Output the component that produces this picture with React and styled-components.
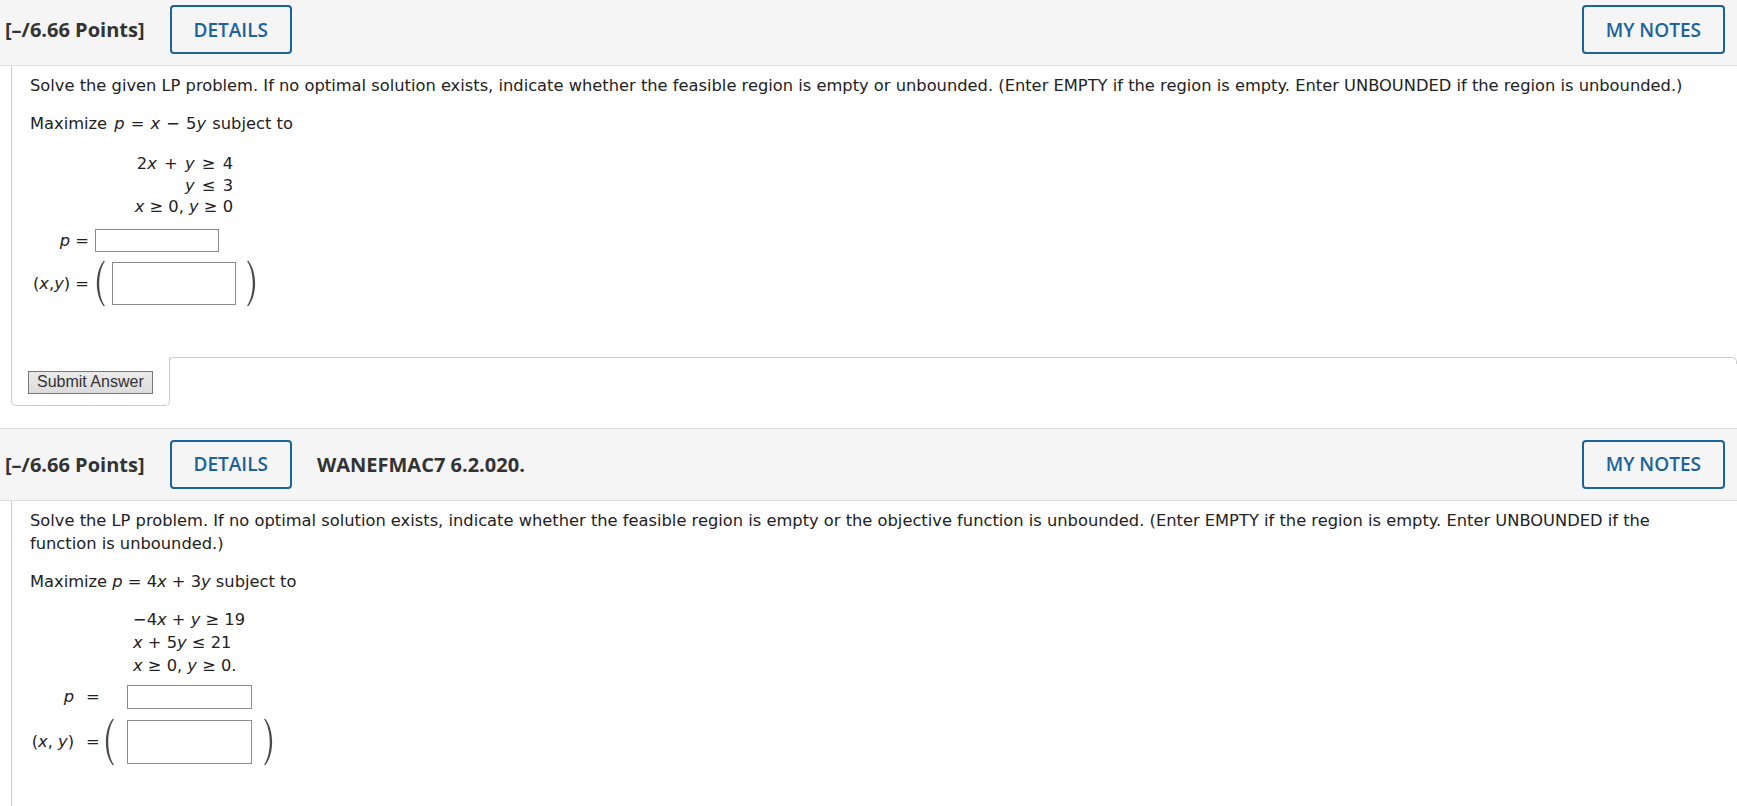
import React from 'react';
import styled, { createGlobalStyle } from 'styled-components';

const GlobalStyle = createGlobalStyle`
	html, body {
		margin: 0;
		padding: 0;
		background: #fff;
	}
	body {
		font-family: 'DejaVu Sans', Verdana, sans-serif;
		color: #222;
		overflow: hidden;
	}
`;

const Page = styled.div`
	margin-top: -7px;
`;

const Header = styled.div`
	display: flex;
	align-items: center;
	gap: 25px;
	height: 71px;
	padding: 0 12px 0 5px;
	background: #f5f5f5;
	border-top: 1px solid #ddd;
	border-bottom: 1px solid #ddd;
	font-family: 'Open Sans', 'Liberation Sans', sans-serif;
`;

const Points = styled.span`
	font-size: 20px;
	font-weight: 700;
	color: #333;
	white-space: nowrap;
`;

const OutlineButton = styled.button`
	height: 49px;
	padding: 0 22px;
	margin-left: ${(p) => (p.$right ? 'auto' : '0')};
	border: 2px solid #1c6399;
	border-radius: 4px;
	background: transparent;
	color: #1c6399;
	font-family: 'Open Sans', 'Liberation Sans', sans-serif;
	font-size: 19px;
	font-weight: 600;
	cursor: pointer;
`;

const Body = styled.div`
	margin-left: 11px;
	border-left: 1px solid #ccc;
	padding: 8px 40px ${(p) => p.$bottom}px 18px;
	font-size: 16.3px;
	line-height: 23px;
`;

const Para = styled.p`
	margin: 0 0 ${(p) => p.$gap || 15}px;
`;

const V = styled.i`
	font-style: italic;
`;

const MathExpr = styled.span`
	margin: 0 1px 0 7px;
	word-spacing: 1px;
`;

const EqRight = styled.div`
	width: 203px;
	display: grid;
	justify-content: end;
	margin-top: 18px;
`;

const EqTable = styled.div`
	display: grid;
	grid-template-columns: repeat(5, auto);
	column-gap: 5px;
	justify-items: end;
	line-height: 21.5px;
`;

const EqWide = styled.span`
	grid-column: 1 / -1;
	justify-self: end;
`;

const EqList = styled.div`
	margin: 15px 0 0 103px;
	line-height: 23px;
`;

const Answers = styled.div`
	display: grid;
	justify-content: start;
	row-gap: ${(p) => p.$gap}px;
	margin-top: ${(p) => p.$top}px;
`;

const AnswerRow = styled.div`
	display: flex;
	align-items: center;
`;

const Label = styled.span`
	flex: none;
	width: ${(p) => p.$w}px;
	text-align: right;
	white-space: nowrap;
`;

const EqSign = styled.span`
	flex: none;
	margin-left: ${(p) => p.$ml}px;
`;

const Slot = styled.span`
	flex: none;
	display: flex;
	width: ${(p) => p.$w}px;
	margin: 0 ${(p) => p.$mr}px 0 ${(p) => p.$ml}px;
`;

const Field = styled.input`
	box-sizing: border-box;
	flex: none;
	width: ${(p) => p.$w}px;
	height: ${(p) => p.$h}px;
	border: 1px solid #8a8a8a;
	background: #fff;
	padding: 0 4px;
	font: inherit;
`;

const SubmitRow = styled.div`
	display: flex;
	align-items: flex-start;
	margin-bottom: 22px;
`;

const Tab = styled.div`
	box-sizing: border-box;
	margin-left: 11px;
	width: 159px;
	height: 49px;
	padding: 14px 0 0 16px;
	border: 1px solid #ccc;
	border-top: none;
	border-radius: 0 0 5px 5px;
`;

const TabRule = styled.div`
	flex: 1;
	height: 6px;
	margin-left: -1px;
	border: 1px solid #ccc;
	border-bottom: none;
	border-radius: 5px 5px 0 0;
`;

const SubmitButton = styled.button`
	height: 23px;
	padding: 0 8px;
	border: 1px solid #777;
	background: linear-gradient(#ebebeb, #dcdcdc);
	color: #333;
	font-family: 'Liberation Sans', Arial, sans-serif;
	font-size: 16px;
	line-height: 20px;
`;

const Paren = ({ side, h }) => {
	const d =
		side === 'left'
			? `M10 0.5 C0.5 ${h * 0.25} 0.5 ${h * 0.75} 10 ${h - 0.5} L10.8 ${h - 1.5} C3.4 ${h * 0.75} 3.4 ${h * 0.25} 10.8 1.5 Z`
			: `M2 0.5 C11.5 ${h * 0.25} 11.5 ${h * 0.75} 2 ${h - 0.5} L1.2 ${h - 1.5} C8.6 ${h * 0.75} 8.6 ${h * 0.25} 1.2 1.5 Z`;
	return (
		<svg width='12' height={h} viewBox={`0 0 12 ${h}`}>
			<path d={d} fill='#4a4a4a' />
		</svg>
	);
};

const QuestionHeader = ({ title }) => (
	<Header>
		<Points>[–/6.66 Points]</Points>
		<OutlineButton>DETAILS</OutlineButton>
		{title && <Points>{title}</Points>}
		<OutlineButton $right>MY NOTES</OutlineButton>
	</Header>
);

const App = () => {
	return (
		<Page>
			<GlobalStyle />

			<QuestionHeader />
			<Body $bottom={50}>
				<Para>
					Solve the given LP problem. If no optimal solution exists, indicate
					whether the feasible region is empty or unbounded. (Enter EMPTY if the
					region is empty. Enter UNBOUNDED if the region is unbounded.)
				</Para>
				<Para $gap={0}>
					Maximize
					<MathExpr>
						<V>p</V> = <V>x</V> − 5<V>y</V>
					</MathExpr>{' '}
					subject to
				</Para>
				<EqRight>
					<EqTable>
						<span>
							2<V>x</V>
						</span>
						<span>+</span>
						<V>y</V>
						<span>≥</span>
						<span>4</span>
						<span />
						<span />
						<V>y</V>
						<span>≤</span>
						<span>3</span>
						<EqWide>
							<V>x</V> ≥ 0, <V>y</V> ≥ 0
						</EqWide>
					</EqTable>
				</EqRight>
				<Answers $gap={8} $top={11}>
					<AnswerRow>
						<Label $w={59}>
							<V>p</V> =
						</Label>
						<Slot $w={0} $ml={6} $mr={0} />
						<Field $w={124} $h={23} />
					</AnswerRow>
					<AnswerRow>
						<Label $w={59}>
							(<V>x</V>,<V>y</V>) =
						</Label>
						<Slot $w={12} $ml={5} $mr={6}>
							<Paren side='left' h={47} />
						</Slot>
						<Field $w={124} $h={43} />
						<Slot $w={12} $ml={10} $mr={0}>
							<Paren side='right' h={47} />
						</Slot>
					</AnswerRow>
				</Answers>
			</Body>
			<SubmitRow>
				<Tab>
					<SubmitButton>Submit Answer</SubmitButton>
				</Tab>
				<TabRule />
			</SubmitRow>

			<QuestionHeader title='WANEFMAC7 6.2.020.' />
			<Body $bottom={40}>
				<Para>
					Solve the LP problem. If no optimal solution exists, indicate whether
					the feasible region is empty or the objective function is unbounded.
					(Enter EMPTY if the region is empty. Enter UNBOUNDED if the function
					is unbounded.)
				</Para>
				<Para $gap={0}>
					Maximize <V>p</V> = 4<V>x</V> + 3<V>y</V> subject to
				</Para>
				<EqList>
					<div>
						−4<V>x</V> + <V>y</V> ≥ 19
					</div>
					<div>
						<V>x</V> + 5<V>y</V> ≤ 21
					</div>
					<div>
						<V>x</V> ≥ 0, <V>y</V> ≥ 0.
					</div>
				</EqList>
				<Answers $gap={9} $top={8}>
					<AnswerRow>
						<Label $w={44}>
							<V>p</V>
						</Label>
						<EqSign $ml={12}>=</EqSign>
						<Slot $w={13} $ml={3} $mr={11} />
						<Field $w={125} $h={24} />
					</AnswerRow>
					<AnswerRow>
						<Label $w={44}>
							(<V>x</V>, <V>y</V>)
						</Label>
						<EqSign $ml={12}>=</EqSign>
						<Slot $w={13} $ml={3} $mr={11}>
							<Paren side='left' h={48} />
						</Slot>
						<Field $w={125} $h={44} />
						<Slot $w={13} $ml={11} $mr={0}>
							<Paren side='right' h={48} />
						</Slot>
					</AnswerRow>
				</Answers>
			</Body>
		</Page>
	);
};

export default App;
